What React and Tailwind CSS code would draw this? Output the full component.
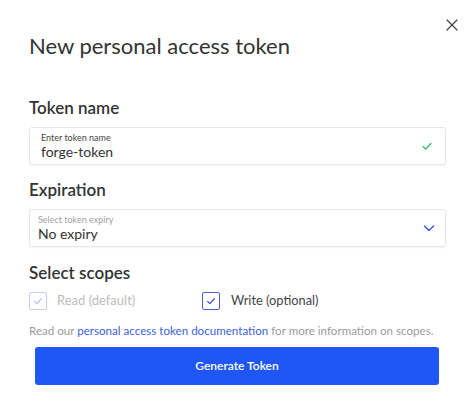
import React from "react";

function Check({ className }) {
  return (
    <svg viewBox="0 0 16 16" className={className} fill="none" stroke="currentColor" strokeWidth="1.6" strokeLinecap="round" strokeLinejoin="round">
      <path d="M3.5 8.5l3 3 6-6.5" />
    </svg>
  );
}

export default function App() {
  return (
    <div className="relative w-[474px] h-[417px] bg-white text-[#333]" style={{ fontFamily: "Lato, 'Open Sans', sans-serif" }}>
      <button className="absolute right-[16px] top-[19px] w-[12px] h-[12px] text-[#444]">
        <svg viewBox="0 0 12 12" className="w-[12px] h-[12px]" stroke="currentColor" strokeWidth="1.3" strokeLinecap="round">
          <path d="M1 1l10 10M11 1L1 11" />
        </svg>
      </button>
      <div className="pl-[29px] pr-[28px] pt-[32px]">
        <h1 className="text-[22px] leading-[28px] font-normal text-[#333]">New personal access token</h1>

        <h2 className="mt-[36px] text-[17px] leading-[24px] font-semibold text-[#333]">Token name</h2>
        <div className="mt-[7px] h-[38px] rounded-[3px] border border-[#e6e6e6] shadow-[0_1px_2px_rgba(0,0,0,0.05)] flex items-center pl-[11px] pr-[11px]">
          <div className="flex-1 flex flex-col">
            <span className="text-[9px] leading-[11px] text-[#444]">Enter token name</span>
            <span className="text-[14px] leading-[17px] text-[#333]">forge-token</span>
          </div>
          <Check className="w-[14px] h-[14px] text-[#3dbb6e]" />
        </div>

        <h2 className="mt-[13px] text-[17px] leading-[24px] font-semibold text-[#333]">Expiration</h2>
        <div className="mt-[7px] h-[38px] rounded-[3px] border border-[#e6e6e6] shadow-[0_1px_2px_rgba(0,0,0,0.05)] flex items-center pl-[8px] pr-[9px]">
          <div className="flex-1 flex flex-col">
            <span className="text-[9px] leading-[11px] text-[#a0a0a0]">Select token expiry</span>
            <span className="text-[14px] leading-[17px] text-[#333]">No expiry</span>
          </div>
          <svg viewBox="0 0 14 14" className="w-[14px] h-[14px] text-[#3b5bd6]" fill="none" stroke="currentColor" strokeWidth="1.5" strokeLinecap="round" strokeLinejoin="round">
            <path d="M2.5 5l4.5 4.5L11.5 5" />
          </svg>
        </div>

        <h2 className="mt-[14px] text-[17px] leading-[24px] font-semibold text-[#333]">Select scopes</h2>
        <div className="mt-[6px] flex items-center h-[20px]">
          <div className="flex items-center w-[173px]">
            <span className="w-[18px] h-[18px] rounded-[2px] border border-[#c3cff2] flex items-center justify-center">
              <Check className="w-[12px] h-[12px] text-[#b3c1ec]" />
            </span>
            <span className="ml-[10px] text-[13px] text-[#bdbdbd]">Read (default)</span>
          </div>
          <div className="flex items-center">
            <span className="w-[18px] h-[18px] rounded-[2px] border border-[#4b5fcf] flex items-center justify-center">
              <Check className="w-[12px] h-[12px] text-[#3a50c8]" />
            </span>
            <span className="ml-[11px] text-[12.8px] text-[#444]">Write (optional)</span>
          </div>
        </div>

        <p className="mt-[11px] text-[11.6px] leading-[18px] text-[#9b9b9b] whitespace-nowrap">
          Read our <a className="text-[#3d62d8]">personal access token documentation</a> for more information on scopes.
        </p>

        <button className="mt-[7px] ml-[6px] w-[404px] h-[38px] rounded-[3px] bg-[#1f56f5] text-white text-[12px] font-semibold flex items-center justify-center">
          Generate Token
        </button>
      </div>
    </div>
  );
}
